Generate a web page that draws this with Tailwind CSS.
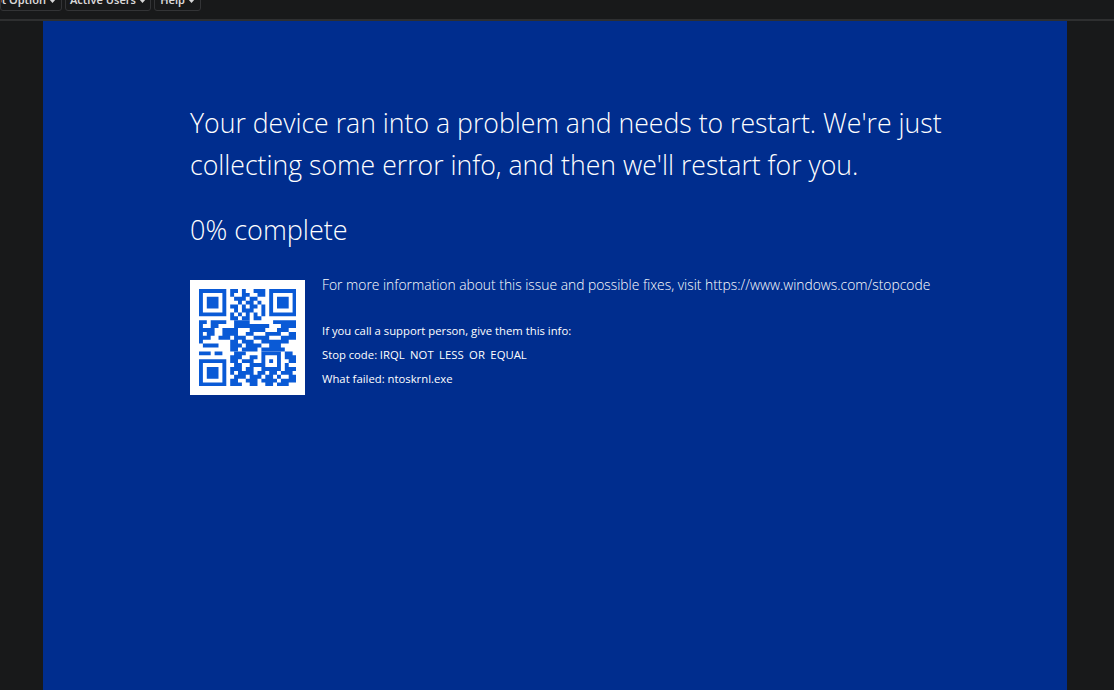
<!doctype html>
<html><head><meta charset="utf-8"><script src="https://cdn.jsdelivr.net/npm/@tailwindcss/browser@4"></script></head>
<body class="bg-[#18191a] h-[690px] w-[1114px] overflow-hidden font-['Open_Sans',sans-serif]">
<header class="h-[21px] border-b-2 border-[#2e2f30] overflow-hidden flex items-end pb-[8px] gap-[3px] text-[11px] font-semibold text-[#d8d8d8] font-['Noto_Sans',sans-serif]">
  <div class="w-[62px] shrink-0 h-[24px] pt-[3px] border border-[#333436] rounded-[3px] flex items-center justify-end gap-[3px] pr-[5px] whitespace-nowrap overflow-hidden"><span>Boot Option</span><svg width="7" height="4" viewBox="0 0 7 4" class="shrink-0"><path d="M0 0h7L3.500 4z" fill="#d8d8d8"/></svg></div>
  <div class="w-[86px] shrink-0 h-[24px] pt-[3px] border border-[#333436] rounded-[3px] flex items-center justify-center gap-[3px] whitespace-nowrap"><span>Active Users</span><svg width="7" height="4" viewBox="0 0 7 4"><path d="M0 0h7L3.500 4z" fill="#d8d8d8"/></svg></div>
  <div class="w-[47px] shrink-0 h-[24px] pt-[3px] border border-[#333436] rounded-[3px] flex items-center justify-center gap-[3px] whitespace-nowrap"><span>Help</span><svg width="7" height="4" viewBox="0 0 7 4"><path d="M0 0h7L3.500 4z" fill="#d8d8d8"/></svg></div>
</header>
<main class="ml-[43px] w-[1024px] h-[669px] bg-[#002d8e] text-white pl-[147px] pt-[81px]">
  <h1 class="text-[26.650px] leading-[42px] font-light w-[800px]">Your device ran into a problem and needs to restart. We're just<br>collecting some error info, and then we'll restart for you.</h1>
  <p class="text-[27px] leading-[42px] font-light mt-[23px]">0% complete</p>
  <section class="flex gap-[17px] mt-[29px]">
    <div class="w-[115px] h-[115px] bg-white shrink-0 flex items-center justify-center">
      <svg width="97.500" height="97.500" viewBox="0 0 25 25" fill="none" stroke="#0a5ad6">
        <path d="M.5.5h6v6h-6zM18.500.5h6v6h-6zM.5 18.500h6v6h-6z"/>
        <path fill="#0a5ad6" stroke="none" d="M2 2h3v3H2zM20 2h3v3h-3zM2 20h3v3H2z"/>
        <path d="M8 .5h2M11 .5h1M14 .5h3M8 1.500h1M11 1.500h2M15 1.500h2M9 2.500h3M13 2.500h2M10 3.500h1M12 3.500h2M15 3.500h1M8 4.500h2M11 4.500h1M13 4.500h2M16 4.500h1M9 5.500h1M11 5.500h3M16 5.500h1M8 6.500h1M10 6.500h1M12 6.500h1M14 6.500h1M16 6.500h1M8 7.500h2M11 7.500h2M14 7.500h2"/>
        <path d="M0 8.500h2M3 8.500h4M9 8.500h4M19 8.500h6M0 9.500h1M3 9.500h2M9 9.500h9M21 9.500h4M0 10.500h4M6 10.500h4M13 10.500h4M20 10.500h3M0 11.500h1M2 11.500h2M6 11.500h4M12 11.500h2M17 11.500h4M23 11.500h2M0 12.500h3M5 12.500h3M9 12.500h3M14 12.500h4M21 12.500h4M0 13.500h1M8 13.500h2M11 13.500h3M16 13.500h7M1 14.500h4M8 14.500h3M12 14.500h4M18 14.500h3M8 15.500h2M11 15.500h4M16 15.500h6"/>
        <path d="M0 16.500h3M4 16.500h2M9 16.500h3M16 16.500h5M22 16.500h2M8 17.500h3M13 17.500h2M16 17.500h1M20 17.500h1M22 17.500h3M8 18.500h2M11 18.500h3M16 18.500h1M18 18.500h1M20 18.500h1M23 18.500h2M9 19.500h2M13 19.500h4M20 19.500h1M22 19.500h1M8 20.500h3M12 20.500h2M16 20.500h5M22 20.500h3M8 21.500h1M10 21.500h4M15 21.500h2M18 21.500h2M21 21.500h3M9 22.500h3M13 22.500h3M17 22.500h2M20 22.500h1M23 22.500h2M8 23.500h2M12 23.500h3M16 23.500h4M21 23.500h4M8 24.500h3M13 24.500h2M17 24.500h2M20 24.500h3"/>
      </svg>
    </div>
    <div>
      <p class="text-[13.850px] leading-[20px] -mt-[5px] font-light">For more information about this issue and possible fixes, visit https://www.windows.com/stopcode</p>
      <p class="text-[11.300px] leading-[24px] mt-[24px] font-normal">If you call a support person, give them this info:</p>
      <p class="text-[11.300px] leading-[24px] font-normal [word-spacing:-0.2px]">Stop code: IRQL&nbsp; NOT&nbsp; LESS&nbsp; OR&nbsp; EQUAL</p>
      <p class="text-[11.300px] leading-[24px] font-normal">What failed: ntoskrnl.exe</p>
    </div>
  </section>
</main>
</body></html>
